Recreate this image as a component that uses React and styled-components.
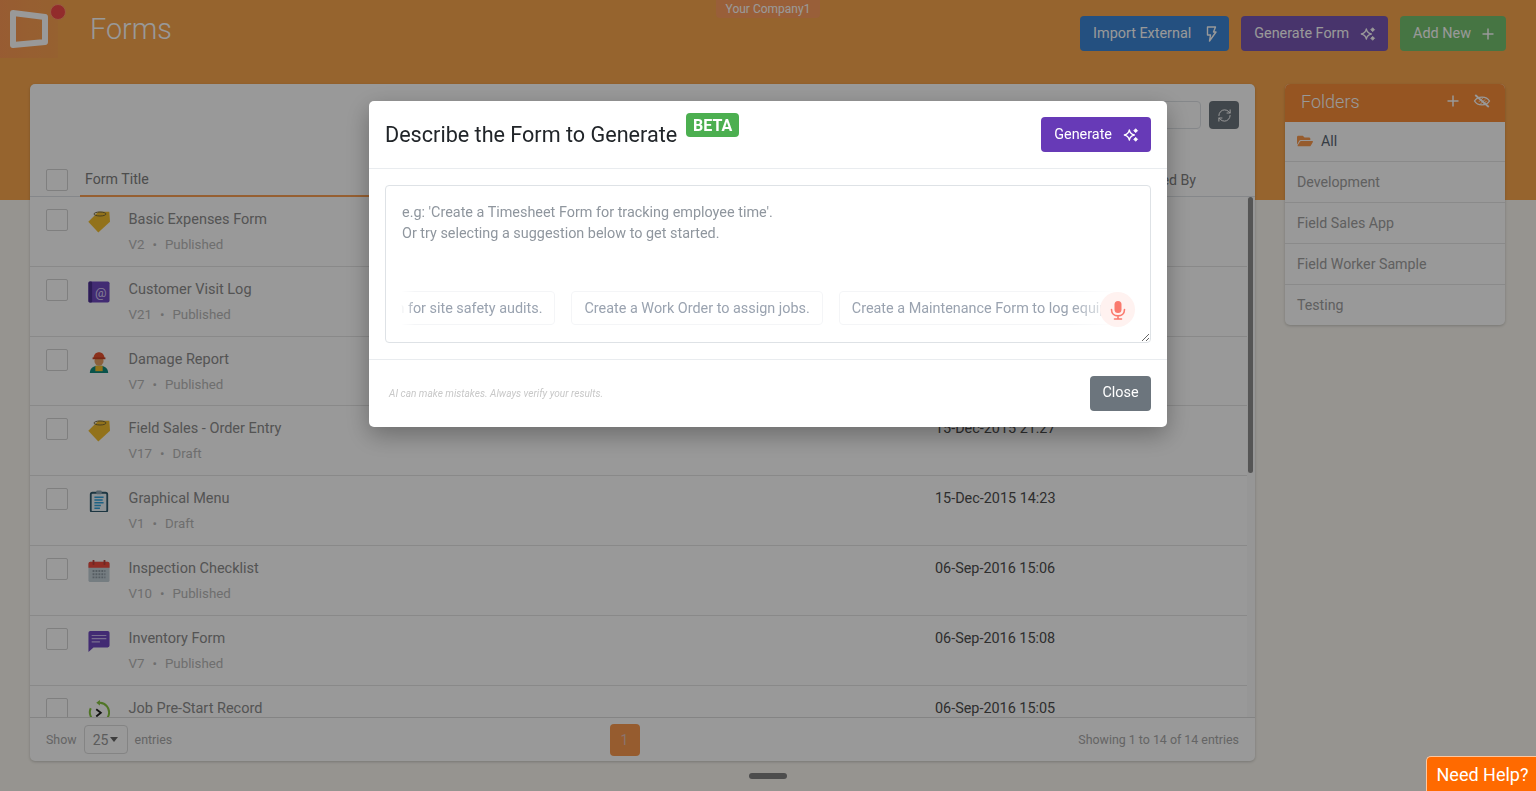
import { createGlobalStyle, styled } from "styled-components";
import { RefreshCw } from "lucide-react";
import { FaFolderOpen } from "react-icons/fa";

const forms = [
  { id: 1, title: "Basic Expenses Form", version: "V2", status: "Published", icon: "tag", date: "15-Dec-2015 20:41" },
  { id: 2, title: "Customer Visit Log", version: "V21", status: "Published", icon: "book", date: "06-Sep-2016 15:02" },
  { id: 3, title: "Damage Report", version: "V7", status: "Published", icon: "worker", date: "06-Sep-2016 15:03" },
  { id: 4, title: "Field Sales - Order Entry", version: "V17", status: "Draft", icon: "tag", date: "15-Dec-2015 21:27" },
  { id: 5, title: "Graphical Menu", version: "V1", status: "Draft", icon: "clipboard", date: "15-Dec-2015 14:23" },
  { id: 6, title: "Inspection Checklist", version: "V10", status: "Published", icon: "calendar", date: "06-Sep-2016 15:06" },
  { id: 7, title: "Inventory Form", version: "V7", status: "Published", icon: "chat", date: "06-Sep-2016 15:08" },
  { id: 8, title: "Job Pre-Start Record", version: "V4", status: "Published", icon: "timer", date: "06-Sep-2016 15:05" },
];

const folders = ["Development", "Field Sales App", "Field Worker Sample", "Testing"];

const suggestions = [
  "Create a Safety Form for site safety audits.",
  "Create a Work Order to assign jobs.",
  "Create a Maintenance Form to log equipment repairs.",
];

const GlobalStyle = createGlobalStyle`
  html, body {
    margin: 0;
    height: 100%;
    overflow: hidden;
  }
  body {
    font-family: Roboto, "Liberation Sans", sans-serif;
    font-size: 14.4px;
    color: #495057;
  }
  * {
    box-sizing: border-box;
  }
`;

const Page = styled.div`
  height: 791px;
  display: flex;
  flex-direction: column;
  background: linear-gradient(#faa74e 200px, #faf7f0 200px);
  position: relative;
  overflow: hidden;
`;

const TopBar = styled.header`
  height: 84px;
  display: flex;
  align-items: flex-start;
  padding-right: 30px;
  position: relative;
`;

const LogoBox = styled.div`
  width: 66px;
  height: 58px;
  flex: none;
`;

const PageTitle = styled.h1`
  margin: 11px 0 0 24px;
  font-size: 28.8px;
  line-height: 36px;
  font-weight: 300;
  color: #fff;
`;

const CompanyTag = styled.div`
  position: absolute;
  top: 0;
  left: 716px;
  width: 104px;
  height: 18px;
  border-radius: 0 0 4px 4px;
  background: #ff9f5f;
  color: #fff;
  font-size: 12px;
  line-height: 18px;
  text-align: center;
`;

const Actions = styled.div`
  margin: 16px 0 0 auto;
  display: flex;
  gap: 12px;
`;

const ActionButton = styled.button`
  height: 35px;
  padding: 0 12px 0 13px;
  display: flex;
  align-items: center;
  gap: ${(p) => p.$gap || 11}px;
  border: 0;
  border-radius: 4px;
  background: ${(p) => p.$bg};
  color: #fff;
  font: 400 14.4px Roboto, sans-serif;
`;

const Content = styled.main`
  height: 677px;
  padding: 0 30px;
  display: flex;
  gap: 30px;
`;

const Card = styled.section`
  width: 1225px;
  flex: none;
  display: flex;
  flex-direction: column;
  border-radius: 5px;
  background: #fff;
  box-shadow: 0 1px 3px rgba(0, 0, 0, 0.2);
  overflow: hidden;
`;

const CardTools = styled.div`
  height: 81px;
  flex: none;
  padding: 17px 16px 0 0;
  display: flex;
  justify-content: flex-end;
  gap: 8px;
`;

const SearchInput = styled.input`
  width: 220px;
  height: 28px;
  border: 1px solid #dee2e6;
  border-radius: 4px;
`;

const RefreshButton = styled.button`
  width: 30px;
  height: 28px;
  padding: 0;
  display: flex;
  align-items: center;
  justify-content: center;
  border: 0;
  border-radius: 4px;
  background: #6c757d;
  color: #fff;
`;

const HeadRow = styled.div`
  height: 32px;
  flex: none;
  display: grid;
  grid-template-columns: 50px 855px 1fr;
  border-bottom: 1px solid #dee2e6;
`;

const HeadCheckCell = styled.div`
  padding: 4px 0 0 16px;
`;

const HeadCell = styled.div`
  height: 32px;
  padding: ${(p) => (p.$right ? 5 : 4)}px ${(p) => (p.$right ? 59 : 0)}px 0 5px;
  font-size: 14.2px;
  line-height: 20px;
  color: #808080;
  border-bottom: ${(p) => (p.$sorted ? "2px solid #fa9f52" : "0")};
  text-align: ${(p) => (p.$right ? "right" : "left")};
`;

const Check = styled.span`
  display: block;
  width: 22px;
  height: 22px;
  border: 1px solid #d4d4d4;
  border-radius: 2px;
  background: #fff;
`;

const TableBody = styled.div`
  flex: 1;
  min-height: 0;
  display: flex;
`;

const Rows = styled.div`
  flex: 1;
  min-width: 0;
  overflow: hidden;
`;

const ScrollTrack = styled.div`
  width: 8px;
  flex: none;
  padding-left: 1px;
  background: #fbfbfb;
`;

const ScrollThumb = styled.div`
  width: 5px;
  height: 276px;
  border-radius: 3px;
  background: #8e8e8e;
`;

const Row = styled.div`
  height: 69.8px;
  padding-top: 12px;
  display: grid;
  grid-template-columns: 58px 40.5px 806.5px 1fr;
  border-bottom: 1px solid #e4e4e4;
`;

const RowCheck = styled.div`
  padding-left: 16px;
`;

const RowIcon = styled.div`
  width: 22px;
  height: 22px;
  margin-top: 2px;

  svg {
    display: block;
    width: 22px;
    height: 22px;
  }
`;

const RowText = styled.div`
  padding-top: 1px;
`;

const RowTitle = styled.div`
  font-size: 14.5px;
  line-height: 20px;
  color: #8c8c8c;
`;

const RowMeta = styled.div`
  margin-top: 5px;
  font-size: 13.3px;
  line-height: 20px;
  color: #b8b8b8;
  display: flex;
  gap: 8px;
`;

const RowDate = styled.div`
  padding-top: 1px;
  line-height: 20px;
  color: #4d4d4d;
`;

const Footer = styled.footer`
  height: 44px;
  flex: none;
  padding: 0 16px;
  display: grid;
  grid-template-columns: 1fr auto 1fr;
  align-items: center;
  border-top: 1px solid #ddd;
  font-size: 12.4px;
  color: #a8a8a8;
`;

const ShowEntries = styled.div`
  display: flex;
  align-items: center;
  gap: 7px;
`;

const PageSelect = styled.div`
  width: 44px;
  height: 29px;
  display: flex;
  align-items: center;
  justify-content: center;
  gap: 2px;
  border: 1px solid #dcdcdc;
  border-radius: 4px;
  font-size: 14px;
  color: #999;

  &::after {
    content: "";
    border: 4px solid transparent;
    border-top: 5px solid #666;
    border-bottom: 0;
  }
`;

const PageNumber = styled.div`
  width: 30px;
  height: 32px;
  margin-right: 36px;
  border-radius: 4px;
  background: #fb9a4f;
  color: #e8c0b8;
  font-size: 14px;
  line-height: 32px;
  text-align: center;
`;

const ShowingText = styled.div`
  text-align: right;
`;

const FolderPanel = styled.aside`
  width: 220px;
  height: 241px;
  flex: none;
  border-radius: 5px;
  background: #fff;
  box-shadow: 0 1px 3px rgba(0, 0, 0, 0.2);
  overflow: hidden;
`;

const FolderHead = styled.div`
  height: 38px;
  padding: 0 14px 4px 16px;
  display: flex;
  align-items: center;
  gap: 14px;
  background: #fa8e3a;
  color: #fff;
`;

const FolderHeadTitle = styled.div`
  margin-right: auto;
  font-size: 18px;
  font-weight: 300;
`;

const FolderItem = styled.div`
  height: ${(p) => (p.$active || p.$last ? 40 : 41)}px;
  padding: 0 12px 1px;
  display: flex;
  align-items: center;
  gap: 8px;
  border-bottom: ${(p) => (p.$last ? "0" : "1px solid #e6e6e6")};
  font-size: 14.2px;
  color: ${(p) => (p.$active ? "#5a6672" : "#a0a0a0")};
`;

const FolderIcon = styled(FaFolderOpen)`
  color: #fa9a4e;
  font-size: 16px;
`;

const Handle = styled.div`
  width: 38px;
  height: 6px;
  margin: 12px auto 0;
  flex: none;
  border-radius: 3px;
  background: #808080;
`;

const Backdrop = styled.div`
  position: fixed;
  inset: 0;
  display: flex;
  justify-content: center;
  align-items: flex-start;
  padding-top: 101px;
  background: rgba(0, 0, 0, 0.4);
`;

const Modal = styled.div`
  width: 798px;
  border-radius: 5px;
  background: #fff;
  box-shadow: 0 8px 24px rgba(0, 0, 0, 0.3);
`;

const ModalHead = styled.div`
  height: 68px;
  padding: 0 16px;
  display: flex;
  align-items: center;
  border-bottom: 1px solid #e9ecef;
`;

const ModalTitle = styled.h2`
  margin: 0;
  font-size: 21.6px;
  font-weight: 400;
  color: #212529;
`;

const BetaBadge = styled.span`
  align-self: flex-start;
  margin: 12px auto 0 9px;
  width: 53px;
  height: 24px;
  border-radius: 4px;
  background: #4caf50;
  color: #fff;
  font-size: 16px;
  font-weight: 700;
  line-height: 25px;
  text-align: center;
`;

const ModalBody = styled.div`
  height: 191px;
  padding: 16px;
  border-bottom: 1px solid #e9ecef;
`;

const PromptBox = styled.div`
  position: relative;
  height: 158px;
`;

const PromptInput = styled.textarea`
  display: block;
  width: 100%;
  height: 158px;
  padding: 16px;
  border: 1px solid #dee2e6;
  border-radius: 4px;
  resize: vertical;
  outline: 0;
  font: 400 14.4px/21px Roboto, sans-serif;

  &::placeholder {
    color: #8f969e;
    opacity: 1;
  }
`;

const SuggestionStrip = styled.div`
  position: absolute;
  left: 16px;
  bottom: 18px;
  width: 715px;
  overflow: hidden;
  mask-image: linear-gradient(90deg, transparent 0, #000 14px, #000 670px, transparent 715px);
`;

const SuggestionTrack = styled.div`
  display: flex;
  gap: 16px;
  transform: translateX(-144px);
`;

const Suggestion = styled.div`
  flex: none;
  height: 34px;
  padding: 0 12px;
  border: 1px solid #f4f5f7;
  border-radius: 4px;
  color: #9aa3b0;
  font-size: 14.4px;
  line-height: 34px;
  white-space: nowrap;
`;

const MicButton = styled.button`
  position: absolute;
  right: 16px;
  bottom: 16px;
  width: 35px;
  height: 35px;
  padding: 0;
  display: flex;
  align-items: center;
  justify-content: center;
  border: 0;
  border-radius: 50%;
  background: #fff2f0;
  color: #fa7a6e;
`;

const ModalFoot = styled.div`
  height: 67px;
  padding: 0 16px 0 20px;
  display: flex;
  align-items: center;
  justify-content: space-between;
`;

const Disclaimer = styled.small`
  font-size: 10.1px;
  font-style: italic;
  color: #c8c8c8;
`;

const CloseButton = styled.button`
  width: 61px;
  height: 35px;
  padding: 0 0 2px;
  border: 0;
  border-radius: 4px;
  background: #6c757d;
  color: #fff;
  font: 400 14.4px Roboto, sans-serif;
`;

const HelpTab = styled.button`
  position: fixed;
  right: 0;
  bottom: 0;
  width: 110px;
  height: 35px;
  padding: 0 0 0 2px;
  border: 1px solid #ffc79e;
  border-width: 1px 0 0 1px;
  border-radius: 5px 0 0 0;
  background: #ff6a00;
  color: #fff;
  font: 400 18px Roboto, sans-serif;
`;

const Logo = () => (
  <svg width="66" height="58" viewBox="0 0 66 58">
    <defs>
      <linearGradient id="logoFade" x1="0" x2="1" y1="0" y2="0">
        <stop offset="0" stopColor="#ff8f5a" stopOpacity="0.55" />
        <stop offset="1" stopColor="#ff8f5a" stopOpacity="0.2" />
      </linearGradient>
    </defs>
    <rect width="58" height="58" fill="url(#logoFade)" />
    <path d="M13 13 L45 17 V42 L13 45 Z" fill="none" stroke="#fff" strokeWidth="6" strokeLinejoin="round" />
    <circle cx="58" cy="12" r="7.5" fill="#f44a4a" stroke="#ff9a6a" strokeWidth="1" />
  </svg>
);

const SparkleIcon = () => (
  <svg width="16" height="16" viewBox="0 0 24 24" fill="none" stroke="currentColor" strokeWidth="2" strokeLinejoin="round">
    <path d="M9.5 4.5 Q10.8 10.5 17 12 Q10.8 13.5 9.5 19.5 Q8.2 13.5 2 12 Q8.2 10.5 9.5 4.5 Z" />
    <path d="M19 2.5 L22 5.5 L19 8.5 L16 5.5 Z" fill="currentColor" strokeWidth="1" />
    <path d="M19 15.5 L22 18.5 L19 21.5 L16 18.5 Z" fill="currentColor" strokeWidth="1" />
  </svg>
);

const BoltIcon = () => (
  <svg width="11" height="16" viewBox="0 0 11 16" fill="none" stroke="currentColor" strokeWidth="1.4" strokeLinejoin="round">
    <path d="M1.5 1 H9.5 L7.5 6 H10 L3.5 15 L4.5 9 H1.5 Z" />
  </svg>
);

const PlusIcon = () => (
  <svg width="12" height="12" viewBox="0 0 12 12" stroke="currentColor" strokeWidth="1.5">
    <path d="M6 0.5 V11.5 M0.5 6 H11.5" />
  </svg>
);

const MicIcon = () => (
  <svg width="22" height="22" viewBox="0 0 22 22" fill="none" stroke="currentColor" strokeWidth="1.6" strokeLinecap="round">
    <rect x="7.5" y="2" width="7" height="12" rx="3.5" fill="currentColor" stroke="none" />
    <path d="M4.5 10.5 C4.5 19 17.5 19 17.5 10.5 M11 17 V20 M7.5 20 H14.5" />
  </svg>
);

const HiddenEye = () => (
  <svg width="18" height="16" viewBox="0 0 24 20" fill="none" stroke="currentColor" strokeWidth="1.8">
    <path d="M2 10 C6 3 18 3 22 10 C18 17 6 17 2 10 Z" />
    <path d="M3 2 L21 18" strokeWidth="2.4" />
    <path d="M8 11 L13 6 M10 14 L16 8 M14 14 L18 10" strokeWidth="1.2" />
  </svg>
);

const TagIcon = () => (
  <svg viewBox="0 0 22 22">
    <path d="M0.3 10.7 L10.3 0.7 H21.3 L22 10.7 L10.3 21.5 Z" fill="#f4bf2e" />
    <ellipse cx="12" cy="3" rx="6" ry="2" fill="none" stroke="#7a6a3a" strokeWidth="1" />
  </svg>
);

const BookIcon = () => (
  <svg viewBox="0 0 24 24">
    <rect x="0.5" y="0.5" width="23" height="23" rx="2" fill="#6f49c0" />
    <rect x="0.5" y="0.5" width="4" height="23" rx="1.5" fill="#4a2f8f" />
    <text x="14" y="17" textAnchor="middle" fontSize="14" fill="#dcd0f5" fontFamily="Roboto, sans-serif">@</text>
  </svg>
);

const WorkerIcon = () => (
  <svg viewBox="0 0 24 24">
    <path d="M2 24 C2 18 7 16 12 16 C17 16 22 18 22 24 Z" fill="#0f8a7e" />
    <path d="M8 16 H16 V22 H8 Z" fill="#f4bf2e" />
    <circle cx="12" cy="11" r="5" fill="#e8a163" />
    <path d="M6 8 C6 -1 18 -1 18 8 Z" fill="#e8532f" />
    <rect x="5" y="7" width="14" height="2" fill="#c94424" />
  </svg>
);

const ClipboardIcon = () => (
  <svg viewBox="0 0 24 24">
    <rect x="3" y="3" width="18" height="21" rx="2" fill="#eaf3f8" stroke="#2f5a6e" strokeWidth="2" />
    <rect x="9" y="0.5" width="6" height="4" rx="1" fill="#8aa4b2" />
    <path d="M7 8 H17 M7 11 H16 M7 14 H17 M7 17 H14 M7 20 H13" stroke="#2fa3de" strokeWidth="1.6" />
  </svg>
);

const CalendarIcon = () => (
  <svg viewBox="0 0 24 24">
    <rect x="0.5" y="2" width="23" height="22" rx="2" fill="#c3d0d8" />
    <path d="M0.5 8.5 V4 Q0.5 2 2.5 2 H21.5 Q23.5 2 23.5 4 V8.5 Z" fill="#ee4b3f" />
    <path d="M6 0.5 V4.5 M18 0.5 V4.5" stroke="#b8443c" strokeWidth="2" strokeLinecap="round" />
    <path d="M5 12 H19 M5 15.5 H19 M5 19 H19" stroke="#8f9ca4" strokeWidth="2" strokeDasharray="2 1.2" />
  </svg>
);

const ChatIcon = () => (
  <svg viewBox="0 0 24 24">
    <path d="M0.5 3 Q0.5 1 2.5 1 H21.5 Q23.5 1 23.5 3 V17 Q23.5 19 21.5 19 H6 L0.5 24 Z" fill="#6f49c0" />
    <path d="M4 6 H20 M4 9.5 H20 M4 13 H13" stroke="#c9b8ee" strokeWidth="1.3" />
  </svg>
);

const TimerIcon = () => (
  <svg viewBox="0 0 24 24" fill="none">
    <path d="M13 3 A10.5 10.5 0 1 1 3 9" stroke="#86c440" strokeWidth="2.2" />
    <path d="M13 0 L9 3 L13 6 Z" fill="#86c440" />
    <path d="M9 10 L14 14 L9 18" stroke="#222" strokeWidth="2" />
  </svg>
);

const formIcons = {
  tag: TagIcon,
  book: BookIcon,
  worker: WorkerIcon,
  clipboard: ClipboardIcon,
  calendar: CalendarIcon,
  chat: ChatIcon,
  timer: TimerIcon,
};

const App = () => {
  return (
    <Page>
      <GlobalStyle />
      <TopBar>
        <LogoBox>
          <Logo />
        </LogoBox>
        <PageTitle>Forms</PageTitle>
        <CompanyTag>Your Company1</CompanyTag>
        <Actions>
          <ActionButton $bg="#3c85d5" $gap={15}>
            Import External
            <BoltIcon />
          </ActionButton>
          <ActionButton $bg="#7857b4">
            Generate Form
            <SparkleIcon />
          </ActionButton>
          <ActionButton $bg="#75c371">
            Add New
            <PlusIcon />
          </ActionButton>
        </Actions>
      </TopBar>

      <Content>
        <Card>
          <CardTools>
            <SearchInput />
            <RefreshButton>
              <RefreshCw size={15} strokeWidth={1.6} />
            </RefreshButton>
          </CardTools>
          <HeadRow>
            <HeadCheckCell>
              <Check />
            </HeadCheckCell>
            <HeadCell $sorted>Form Title</HeadCell>
            <HeadCell $right>Modified By</HeadCell>
          </HeadRow>
          <TableBody>
            <Rows>
              {forms.map((form) => {
                const FormIcon = formIcons[form.icon];
                return (
                  <Row key={form.id}>
                    <RowCheck>
                      <Check />
                    </RowCheck>
                    <RowIcon>
                      <FormIcon />
                    </RowIcon>
                    <RowText>
                      <RowTitle>{form.title}</RowTitle>
                      <RowMeta>
                        <span>{form.version}</span>
                        <span>•</span>
                        <span>{form.status}</span>
                      </RowMeta>
                    </RowText>
                    <RowDate>{form.date}</RowDate>
                  </Row>
                );
              })}
            </Rows>
            <ScrollTrack>
              <ScrollThumb />
            </ScrollTrack>
          </TableBody>
          <Footer>
            <ShowEntries>
              Show
              <PageSelect>25</PageSelect>
              entries
            </ShowEntries>
            <PageNumber>1</PageNumber>
            <ShowingText>Showing 1 to 14 of 14 entries</ShowingText>
          </Footer>
        </Card>

        <FolderPanel>
          <FolderHead>
            <FolderHeadTitle>Folders</FolderHeadTitle>
            <PlusIcon />
            <HiddenEye />
          </FolderHead>
          <FolderItem $active>
            <FolderIcon />
            All
          </FolderItem>
          {folders.map((name, index) => (
            <FolderItem key={name} $last={index === folders.length - 1}>
              {name}
            </FolderItem>
          ))}
        </FolderPanel>
      </Content>

      <Handle />

      <Backdrop>
        <Modal>
          <ModalHead>
            <ModalTitle>Describe the Form to Generate</ModalTitle>
            <BetaBadge>BETA</BetaBadge>
            <ActionButton $bg="#673ab7">
              Generate
              <SparkleIcon />
            </ActionButton>
          </ModalHead>
          <ModalBody>
            <PromptBox>
              <PromptInput
                placeholder={
                  "e.g: 'Create a Timesheet Form for tracking employee time'.\nOr try selecting a suggestion below to get started."
                }
              />
              <SuggestionStrip>
                <SuggestionTrack>
                  {suggestions.map((text) => (
                    <Suggestion key={text}>{text}</Suggestion>
                  ))}
                </SuggestionTrack>
              </SuggestionStrip>
              <MicButton>
                <MicIcon />
              </MicButton>
            </PromptBox>
          </ModalBody>
          <ModalFoot>
            <Disclaimer>AI can make mistakes. Always verify your results.</Disclaimer>
            <CloseButton>Close</CloseButton>
          </ModalFoot>
        </Modal>
      </Backdrop>

      <HelpTab>Need Help?</HelpTab>
    </Page>
  );
};

export default App;
